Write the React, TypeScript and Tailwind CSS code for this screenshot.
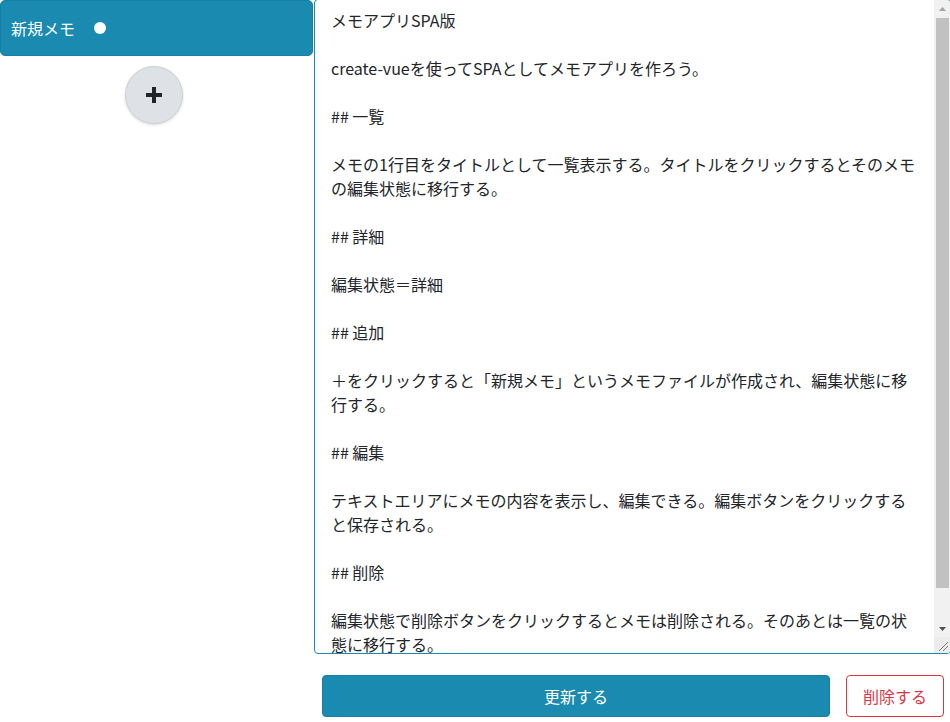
import { useState } from 'react'

const INITIAL_MEMO = `メモアプリSPA版

create-vueを使ってSPAとしてメモアプリを作ろう。

## 一覧

メモの1行目をタイトルとして一覧表示する。タイトルをクリックするとそのメモの編集状態に移行する。

## 詳細

編集状態＝詳細

## 追加

＋をクリックすると「新規メモ」というメモファイルが作成され、編集状態に移行する。

## 編集

テキストエリアにメモの内容を表示し、編集できる。編集ボタンをクリックすると保存される。

## 削除

編集状態で削除ボタンをクリックするとメモは削除される。そのあとは一覧の状態に移行する。
`

function ScrollBar() {
  return (
    <div className="flex w-[16px] shrink-0 flex-col bg-[#f1f1f1]">
      <div className="flex h-[18px] items-center justify-center">
        <svg width="7" height="4" viewBox="0 0 7 4" fill="#a3a3a3">
          <polygon points="3.5,0 7,4 0,4" />
        </svg>
      </div>
      <div className="ml-[2px] mr-px h-[570px] bg-[#c1c1c1]" />
      <div className="flex-1" />
      <div className="flex h-[17px] items-center justify-center">
        <svg width="7" height="4" viewBox="0 0 7 4" fill="#505050">
          <polygon points="0,0 7,0 3.5,4" />
        </svg>
      </div>
      <div className="flex h-[16px] items-end justify-end bg-[#ececec] pb-[2px] pr-[2px]">
        <svg width="10" height="10" viewBox="0 0 10 10" stroke="#7a7a7a" strokeWidth="1">
          <line x1="1" y1="10" x2="10" y2="1" />
          <line x1="5" y1="10" x2="10" y2="5" />
        </svg>
      </div>
    </div>
  )
}

export default function App() {
  const [text, setText] = useState(INITIAL_MEMO)

  return (
    <div
      className="flex h-[722px] w-[950px] overflow-hidden bg-white text-[#212529]"
      style={{ fontFamily: '"Noto Sans CJK JP", "Noto Sans", sans-serif' }}
    >
      {/* 一覧 */}
      <aside className="flex w-[314px] shrink-0 flex-col pr-px">
        <div className="flex h-[56px] w-full items-center gap-[19px] rounded-[5px] border border-[#177fa3] bg-[#1a8ab0] px-[10px] text-[16px] text-white">
          <span>新規メモ</span>
          <span className="h-[12px] w-[12px] rounded-full bg-white" />
        </div>
        <button className="ml-[125px] mt-[10px] flex h-[58px] w-[58px] items-center justify-center rounded-full border border-[#cdd1d5] bg-[#dee2e6] shadow-[0_1px_3px_rgba(0,0,0,0.15)]">
          <svg width="16" height="16" viewBox="0 0 16 16" fill="#212529">
            <rect x="6" y="0" width="4" height="16" />
            <rect x="0" y="6" width="16" height="4" />
          </svg>
        </button>
      </aside>

      {/* 詳細 */}
      <main className="flex w-[637px] shrink-0 flex-col">
        <div className="-mt-px flex h-[655px] overflow-hidden rounded-[4px] border border-[#1a8ab0]">
          <textarea
            value={text}
            onChange={(e) => setText(e.target.value)}
            className="min-w-0 flex-1 resize-none overflow-hidden px-4 pt-[8px] text-[16px] leading-[24px] outline-none"
          />
          <ScrollBar />
        </div>
        <div className="mt-[21px] flex gap-[16px] pl-[8px]">
          <button className="h-[42px] w-[508px] rounded-[4px] border border-[#177fa3] bg-[#1a8ab0] text-[16px] text-white">
            更新する
          </button>
          <button className="h-[42px] w-[98px] rounded-[4px] border border-[#dc3545] bg-white text-[16px] text-[#dc3545]">
            削除する
          </button>
        </div>
      </main>
    </div>
  )
}
